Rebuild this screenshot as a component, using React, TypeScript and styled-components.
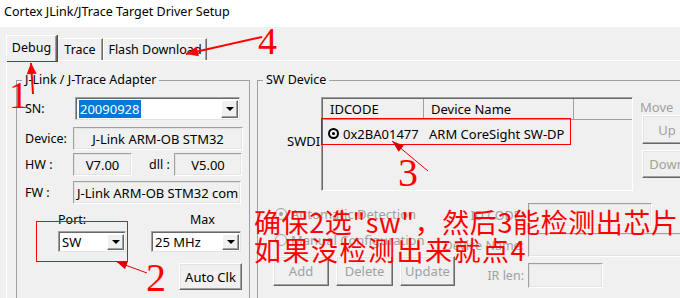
import React from 'react';
import styled, { createGlobalStyle } from 'styled-components';

const GlobalStyle = createGlobalStyle`
  html, body {
    margin: 0;
    padding: 0;
    background: #f0f0f0;
  }
  body {
    font-family: "Noto Sans", "Liberation Sans", sans-serif;
    font-size: 12.5px;
    color: #000;
  }
  * { box-sizing: border-box; }
`;

const Window = styled.div`
  position: relative;
  width: 680px;
  height: 298px;
  overflow: hidden;
  background: #f0f0f0;
`;

const TitleBar = styled.div`
  height: 27px;
  line-height: 24px;
  padding-left: 4px;
  background: #fff;
  font-size: 12.5px;
`;

const Content = styled.div`
  padding: 8px 0 0 6px;
`;

const TabStrip = styled.div`
  display: flex;
  align-items: flex-end;
  height: 25px;
`;

const Tab = styled.div<{ $w: number; $active?: boolean }>`
  width: ${p => p.$w}px;
  height: ${p => (p.$active ? 26 : 22)}px;
  margin-bottom: ${p => (p.$active ? -1 : 0)}px;
  position: relative;
  z-index: ${p => (p.$active ? 1 : 0)};
  display: flex;
  align-items: center;
  justify-content: center;
  padding-bottom: ${p => (p.$active ? 2 : 0)}px;
  background: #f0f0f0;
  border-top: 1px solid #fff;
  border-left: 1px solid #fff;
  border-right: 1px solid #696969;
  box-shadow: inset -1px 0 #a0a0a0;
  font-size: 12.5px;
`;

const Panel = styled.div`
  display: flex;
  align-items: flex-start;
  gap: 7px;
  height: 240px;
  padding: 11px 0 0 9px;
  border-top: 1px solid #fff;
  border-left: 1px solid #fff;
  overflow: hidden;
`;

const Group = styled.fieldset<{ $w: number }>`
  flex: none;
  width: ${p => p.$w}px;
  height: 240px;
  margin: 0;
  padding: 0;
  min-width: 0;
  border: 1px solid #a0a0a0;
`;

const Legend = styled.legend`
  margin-left: 5px;
  padding: 0 3px;
  line-height: 16px;
  font-size: 12.5px;
`;

const Row = styled.div<{ $top: number; $h: number; $pad?: number }>`
  display: flex;
  align-items: center;
  margin-top: ${p => p.$top}px;
  height: ${p => p.$h}px;
  padding-left: ${p => p.$pad ?? 8}px;
`;

const Label = styled.span<{ $w?: number; $ml?: number; $dim?: boolean; $right?: boolean }>`
  flex: none;
  width: ${p => (p.$w ? `${p.$w}px` : 'auto')};
  margin-left: ${p => p.$ml ?? 0}px;
  color: ${p => (p.$dim ? '#a0a0a0' : '#000')};
  text-align: ${p => (p.$right ? 'right' : 'left')};
  white-space: nowrap;
`;

const ReadBox = styled.div<{ $w: number; $h?: number; $ml?: number; $left?: boolean }>`
  flex: none;
  width: ${p => p.$w}px;
  height: ${p => p.$h ?? 23}px;
  margin-left: ${p => p.$ml ?? 0}px;
  display: flex;
  align-items: center;
  justify-content: ${p => (p.$left ? 'flex-start' : 'center')};
  padding: 0 3px;
  overflow: hidden;
  white-space: nowrap;
  font-size: 13px;
  border: 1px solid;
  border-color: #a0a0a0 #fff #fff #a0a0a0;
  box-shadow: inset 1px 1px #e3e3e3, inset -1px -1px #e3e3e3;
`;

const Combo = styled.div<{ $w: number; $h: number; $ml?: number }>`
  flex: none;
  display: flex;
  width: ${p => p.$w}px;
  height: ${p => p.$h}px;
  margin-left: ${p => p.$ml ?? 0}px;
  background: #fff;
  border: 1px solid;
  border-color: #a0a0a0 #e3e3e3 #e3e3e3 #a0a0a0;
  box-shadow: inset 1px 1px #696969;
  padding: 2px 1px 1px 2px;
`;

const ComboText = styled.div`
  flex: 1;
  display: flex;
  align-items: center;
  padding-left: 1px;
  font-size: 13px;
`;

const Selected = styled.span`
  background: #0078d7;
  color: #fff;
  padding: 1px 1px;
  line-height: 16px;
`;

const DropButton = styled.div`
  flex: none;
  width: 17px;
  display: flex;
  align-items: center;
  justify-content: center;
  background: #f0f0f0;
  border: 1px solid;
  border-color: #fff #696969 #696969 #fff;
  box-shadow: inset -1px -1px #a0a0a0;

  &::after {
    content: '';
    border-left: 4px solid transparent;
    border-right: 4px solid transparent;
    border-top: 4px solid #000;
  }
`;

const Button = styled.div<{ $w: number; $h: number; $ml?: number; $mt?: number; $disabled?: boolean }>`
  flex: none;
  width: ${p => p.$w}px;
  height: ${p => p.$h}px;
  margin-left: ${p => p.$ml ?? 0}px;
  margin-top: ${p => p.$mt ?? 0}px;
  display: flex;
  align-items: center;
  justify-content: center;
  color: ${p => (p.$disabled ? '#a0a0a0' : '#000')};
  font-size: 13px;
  background: #f0f0f0;
  border: 1px solid;
  border-color: #fff #696969 #696969 #fff;
  box-shadow: inset -1px -1px #a0a0a0, inset 1px 1px #e3e3e3;
`;

const DeviceArea = styled.div`
  display: flex;
  align-items: flex-start;
  margin-top: 9px;
`;

const SideLabel = styled.div`
  width: 63px;
  padding: 35px 0 0 29px;
  overflow: hidden;
  white-space: nowrap;
  font-size: 13px;
`;

const ListBox = styled.div`
  flex: none;
  width: 312px;
  height: 94px;
  border: 1px solid;
  border-color: #a0a0a0 #fff #fff #a0a0a0;
  box-shadow: inset 1px 1px #696969;
  padding: 1px 0 0 1px;
`;

const ListRow = styled.div<{ $h: number; $head?: boolean }>`
  display: grid;
  grid-template-columns: 101px 150px 1fr;
  height: ${p => p.$h}px;
  border-bottom: ${p => (p.$head ? '1px solid #a0a0a0' : 'none')};
  font-size: 13px;
`;

const Cell = styled.div<{ $head?: boolean }>`
  display: flex;
  align-items: center;
  gap: 4px;
  padding-left: ${p => (p.$head ? 7 : 5)}px;
  border-right: ${p => (p.$head ? '1px solid #a0a0a0' : 'none')};
  white-space: nowrap;
`;

const PickedDot = styled.span`
  width: 11px;
  height: 11px;
  border: 2px solid #000;
  border-radius: 50%;
  display: flex;
  align-items: center;
  justify-content: center;

  &::after {
    content: '';
    width: 3px;
    height: 3px;
    border-radius: 50%;
    background: #000;
  }
`;

const MoveColumn = styled.div`
  display: flex;
  flex-direction: column;
  margin-left: 7px;
  color: #a0a0a0;
`;

const MoveTitle = styled.div`
  height: 18px;
  padding: 1px 0 0 0;
  font-size: 13px;
`;

const LowerArea = styled.div`
  display: flex;
  align-items: flex-start;
`;

const RadioColumn = styled.div`
  width: 182px;
  padding-top: 13px;
`;

const RadioRow = styled.div`
  display: flex;
  align-items: center;
  gap: 4px;
  height: 20px;
  margin-bottom: 6px;
  padding-left: 17px;
  color: #a0a0a0;
  font-size: 13px;
`;

const Radio = styled.span<{ $on?: boolean }>`
  width: 12px;
  height: 12px;
  border: 1px solid #a0a0a0;
  border-radius: 50%;
  background: #f0f0f0;
  display: flex;
  align-items: center;
  justify-content: center;

  &::after {
    content: '';
    width: 4px;
    height: 4px;
    border-radius: 50%;
    background: ${p => (p.$on ? '#a0a0a0' : 'transparent')};
  }
`;

const ButtonRow = styled.div`
  display: flex;
  gap: 7px;
  margin-top: 6px;
  padding-left: 15px;
`;

const FieldGrid = styled.div`
  display: grid;
  grid-template-columns: 84px auto;
  grid-template-rows: 24px 24px 25px;
  column-gap: 4px;
  row-gap: 6px;
  align-items: center;
  margin-top: 12px;
  color: #a0a0a0;
`;

const Overlay = styled.svg`
  position: absolute;
  left: 0;
  top: 0;
  pointer-events: none;
`;

const Mark = styled.span<{ $x: number; $y: number; $size?: number }>`
  position: absolute;
  left: ${p => p.$x}px;
  top: ${p => p.$y}px;
  font-family: "Liberation Serif", "Times New Roman", serif;
  font-size: ${p => p.$size ?? 38}px;
  line-height: ${p => p.$size ?? 38}px;
  color: #f00;
`;

const RedBox = styled.div<{ $x: number; $y: number; $w: number; $h: number }>`
  position: absolute;
  left: ${p => p.$x}px;
  top: ${p => p.$y}px;
  width: ${p => p.$w}px;
  height: ${p => p.$h}px;
  border: 1px solid #f00;
`;

const Note = styled.div`
  position: absolute;
  left: 254px;
  top: 208px;
  font-family: "Noto Sans CJK SC", "Noto Sans", sans-serif;
  font-size: 27px;
  line-height: 28px;
  color: #f00;
  white-space: nowrap;
`;

const NoteLine = styled.div<{ $spacing: number }>`
  letter-spacing: ${p => p.$spacing}px;
`;

const arrowHead = (x1: number, y1: number, x2: number, y2: number, len: number, w: number) => {
  const d = Math.hypot(x2 - x1, y2 - y1);
  const ux = (x2 - x1) / d;
  const uy = (y2 - y1) / d;
  const bx = x2 - ux * len;
  const by = y2 - uy * len;
  return `${x2},${y2} ${bx - uy * w},${by + ux * w} ${bx + uy * w},${by - ux * w}`;
};

const arrows = [
  { x1: 33, y1: 94, x2: 31, y2: 63, sw: 2, len: 11, w: 5, c: '#f00' },
  { x1: 262, y1: 37, x2: 186, y2: 54, sw: 2, len: 12, w: 5, c: '#f00' },
  { x1: 147, y1: 273, x2: 117, y2: 262, sw: 1, len: 10, w: 4, c: '#d00' },
  { x1: 428, y1: 171, x2: 392, y2: 141, sw: 1, len: 12, w: 4, c: '#d00' },
];

const App = () => (
  <Window>
    <GlobalStyle />
    <TitleBar>Cortex JLink/JTrace Target Driver Setup</TitleBar>
    <Content>
      <TabStrip>
        <Tab $w={51} $active>Debug</Tab>
        <Tab $w={46}>Trace</Tab>
        <Tab $w={104}>Flash Download</Tab>
      </TabStrip>
      <Panel>
        <Group $w={234}>
          <Legend>J-Link / J-Trace Adapter</Legend>
          <Row $top={9} $h={23}>
            <Label $w={50}>SN:</Label>
            <Combo $w={165} $h={23}>
              <ComboText><Selected>20090928</Selected></ComboText>
              <DropButton />
            </Combo>
          </Row>
          <Row $top={7} $h={23}>
            <Label $w={48}>Device:</Label>
            <ReadBox $w={170}>J-Link ARM-OB STM32</ReadBox>
          </Row>
          <Row $top={3} $h={23}>
            <Label $w={48}>HW :</Label>
            <ReadBox $w={59}>V7.00</ReadBox>
            <Label $w={25} $ml={17}>dll :</Label>
            <ReadBox $w={68}>V5.00</ReadBox>
          </Row>
          <Row $top={5} $h={23}>
            <Label $w={48}>FW :</Label>
            <ReadBox $w={168} $left>J-Link ARM-OB STM32 com</ReadBox>
          </Row>
          <Row $top={8} $h={14} $pad={41}>
            <Label $w={132}>Port:</Label>
            <Label>Max</Label>
          </Row>
          <Row $top={5} $h={21} $pad={41}>
            <Combo $w={68} $h={21}>
              <ComboText>SW</ComboText>
              <DropButton />
            </Combo>
            <Combo $w={90} $h={21} $ml={25}>
              <ComboText>25 MHz</ComboText>
              <DropButton />
            </Combo>
          </Row>
          <Row $top={11} $h={27} $pad={162}>
            <Button $w={63} $h={27}>Auto Clk</Button>
          </Row>
        </Group>
        <Group $w={450}>
          <Legend>SW Device</Legend>
          <DeviceArea>
            <SideLabel>SWDI</SideLabel>
            <ListBox>
              <ListRow $h={21} $head>
                <Cell $head>IDCODE</Cell>
                <Cell $head>Device Name</Cell>
                <Cell />
              </ListRow>
              <ListRow $h={27}>
                <Cell><PickedDot />0x2BA01477</Cell>
                <Cell>ARM CoreSight SW-DP</Cell>
                <Cell />
              </ListRow>
            </ListBox>
            <MoveColumn>
              <MoveTitle>Move</MoveTitle>
              <Button $w={50} $h={29} $ml={2} $disabled>Up</Button>
              <Button $w={50} $h={28} $ml={2} $mt={6} $disabled>Down</Button>
            </MoveColumn>
          </DeviceArea>
          <LowerArea>
            <RadioColumn>
              <RadioRow><Radio $on />Automatic Detection</RadioRow>
              <RadioRow><Radio />Manual Configuration</RadioRow>
              <ButtonRow>
                <Button $w={56} $h={30} $disabled>Add</Button>
                <Button $w={57} $h={30} $disabled>Delete</Button>
                <Button $w={55} $h={30} $disabled>Update</Button>
              </ButtonRow>
            </RadioColumn>
            <FieldGrid>
              <Label $right $dim>ID CODE:</Label>
              <ReadBox $w={124} $h={24} />
              <Label $right $dim>Device Name:</Label>
              <ReadBox $w={170} $h={24} />
              <Label $right $dim>IR len:</Label>
              <ReadBox $w={75} $h={25} />
            </FieldGrid>
          </LowerArea>
        </Group>
      </Panel>
    </Content>

    <RedBox $x={7} $y={35} $w={51} $h={27} />
    <RedBox $x={36} $y={221} $w={92} $h={41} />
    <RedBox $x={321} $y={118} $w={250} $h={27} />
    <Overlay width={680} height={298}>
      {arrows.map((a, i) => (
        <g key={i}>
          <line x1={a.x1} y1={a.y1} x2={a.x2} y2={a.y2} stroke={a.c} strokeWidth={a.sw} />
          <polygon points={arrowHead(a.x1, a.y1, a.x2, a.y2, a.len, a.w)} fill={a.c} />
        </g>
      ))}
    </Overlay>
    <Mark $x={9} $y={76}>1</Mark>
    <Mark $x={146} $y={258} $size={40}>2</Mark>
    <Mark $x={398} $y={153} $size={40}>3</Mark>
    <Mark $x={258} $y={22}>4</Mark>
    <Note>
      <NoteLine $spacing={0.6}>确保2选"sw"，然后3能检测出芯片，</NoteLine>
      <NoteLine $spacing={1.5}>如果没检测出来就点4</NoteLine>
    </Note>
  </Window>
);

export default App;
